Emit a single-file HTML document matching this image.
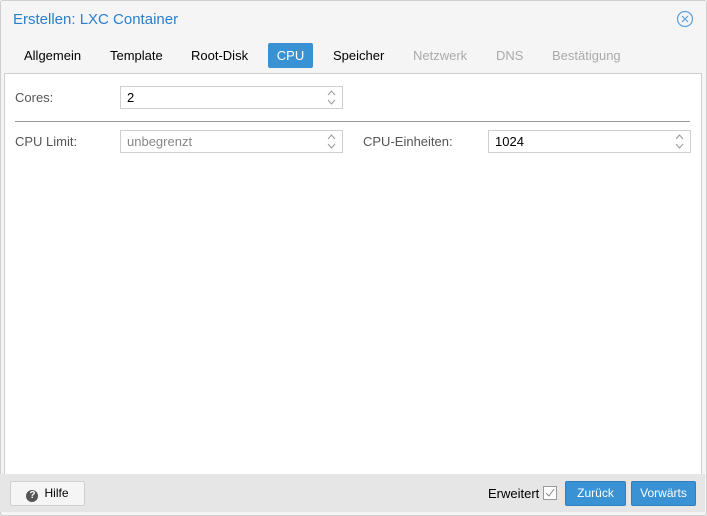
<!DOCTYPE html>
<html><head><style>
body{margin:0;width:707px;height:516px;background:#fff;font-family:"Liberation Sans",Arial,sans-serif;font-size:13px;position:relative;overflow:hidden}
.win{position:absolute;left:0;top:0;width:705px;height:514px;background:#f5f5f5;border:1px solid #cfcfcf;border-radius:3px;box-shadow:0 1px 3px rgba(0,0,0,.25)}
.a{position:absolute;white-space:nowrap}
.title{left:13px;top:11px;font-size:15px;color:#2a7fcc}
.tab{top:48px;color:#000}
.dis{color:#aaa}
.cpu{left:268px;top:43px;width:45px;height:25px;background:#3892d4;color:#fff;border-radius:2px;text-align:center;line-height:25px}
.body{position:absolute;left:4px;top:73px;width:696px;height:400px;background:#fff;border:1px solid #cfcfcf}
.lbl{color:#555}
.inp{position:absolute;height:21px;border:1px solid #cfcfcf;background:#fff;line-height:21px;padding-left:6px;box-sizing:content-box}
.spin{position:absolute;right:6px;top:2px;width:9px;height:17px}
.foot{position:absolute;left:0;top:474px;width:705px;height:38px;background:#e6e6e6}
.btn{position:absolute;top:481px;height:23px;border-radius:2px;line-height:23px;text-align:center;font-size:12px}
.blue{background:#3892d4;border:1px solid #2f7fc0;color:#fff}
</style></head><body>
<div class="win"></div>
<div class="a title">Erstellen: LXC Container</div>
<svg class="a" style="left:676px;top:10px" width="18" height="18" viewBox="0 0 18 18"><circle cx="9" cy="9" r="7.5" fill="none" stroke="#5a9fe0" stroke-width="1.2"/><path d="M6 6L12 12M12 6L6 12" stroke="#5a9fe0" stroke-width="1.2"/></svg>
<div class="a tab" style="left:24px">Allgemein</div>
<div class="a tab" style="left:110px">Template</div>
<div class="a tab" style="left:191px">Root-Disk</div>
<div class="a cpu">CPU</div>
<div class="a tab" style="left:333px">Speicher</div>
<div class="a tab dis" style="left:413px">Netzwerk</div>
<div class="a tab dis" style="left:496px">DNS</div>
<div class="a tab dis" style="left:552px">Bestätigung</div>
<div class="body"></div>
<div class="a lbl" style="left:15px;top:90px">Cores:</div>
<div class="inp" style="left:120px;top:86px;width:215px">2<svg class="spin" viewBox="0 0 9 17"><path d="M1 6L4.5 2L8 6M1 11L4.5 15L8 11" fill="none" stroke="#999"/></svg></div>
<div class="a" style="left:15px;top:121px;width:675px;height:1px;background:#999"></div>
<div class="a lbl" style="left:15px;top:134px">CPU Limit:</div>
<div class="inp" style="left:120px;top:130px;width:215px;color:#888">unbegrenzt<svg class="spin" viewBox="0 0 9 17"><path d="M1 6L4.5 2L8 6M1 11L4.5 15L8 11" fill="none" stroke="#999"/></svg></div>
<div class="a lbl" style="left:363px;top:134px">CPU-Einheiten:</div>
<div class="inp" style="left:488px;top:130px;width:195px">1024<svg class="spin" viewBox="0 0 9 17"><path d="M1 6L4.5 2L8 6M1 11L4.5 15L8 11" fill="none" stroke="#999"/></svg></div>
<div class="foot"></div>
<div class="btn" style="left:10px;width:73px;background:#f5f5f5;border:1px solid #d0d0d0;color:#000"><span style="display:inline-block;width:12px;height:12px;border-radius:6px;background:#555;color:#fff;font-size:10px;line-height:12px;font-weight:bold;vertical-align:-1px;margin-right:6px">?</span>Hilfe</div>
<div class="a" style="left:488px;top:486px;font-size:13px">Erweitert</div>
<svg class="a" style="left:543px;top:486px" width="14" height="14" viewBox="0 0 14 14"><rect x=".5" y=".5" width="13" height="13" fill="#fff" stroke="#999"/><path d="M3 7L6 10L11 3" fill="none" stroke="#888"/></svg>
<div class="btn blue" style="left:565px;width:59px">Zurück</div>
<div class="btn blue" style="left:631px;width:63px">Vorwärts</div>
</body></html>
